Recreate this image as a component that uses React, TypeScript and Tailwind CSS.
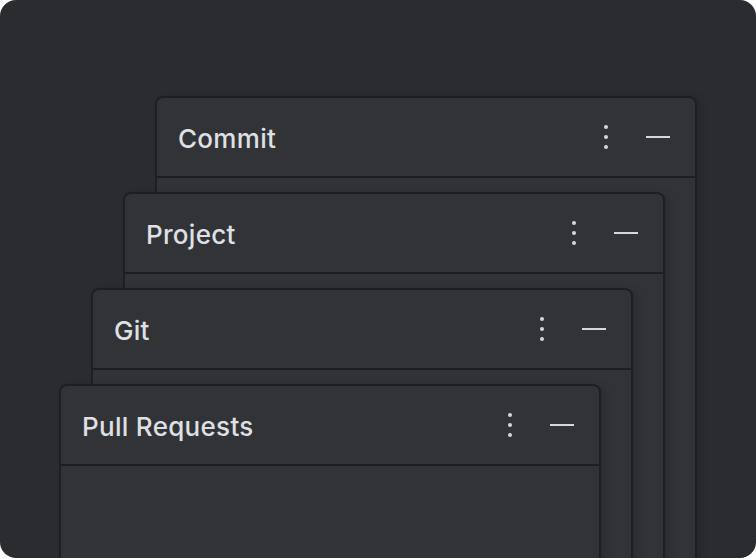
const panels = [
  { title: "Commit", left: 155, top: 96 },
  { title: "Project", left: 123, top: 192 },
  { title: "Git", left: 91, top: 288 },
  { title: "Pull Requests", left: 59, top: 384 },
];

function Kebab() {
  return (
    <div className="flex flex-col items-center gap-[6px]">
      <span className="h-[4px] w-[4px] rounded-full bg-[#d6d7db]" />
      <span className="h-[4px] w-[4px] rounded-full bg-[#d6d7db]" />
      <span className="h-[4px] w-[4px] rounded-full bg-[#d6d7db]" />
    </div>
  );
}

export default function App() {
  return (
    <div className="h-[558px] w-[756px] bg-white" style={{ fontFamily: "Inter, 'Noto Sans', sans-serif" }}>
      <div className="relative h-full w-full overflow-hidden rounded-2xl bg-[#2b2c30]">
        {panels.map((p) => (
          <div
            key={p.title}
            className="absolute flex h-[600px] w-[542px] flex-col rounded-lg border-2 border-[#1e1f22] bg-[#323337] shadow-[4px_0_6px_rgba(0,0,0,0.12)]"
            style={{ left: p.left, top: p.top }}
          >
            <div className="flex h-[80px] items-center border-b-2 border-[#1e1f22] pl-[21px] pr-[25px]">
              <span className="flex-1 pt-[2px] text-[26px] font-medium tracking-[0.3px] text-[#dfe0e4]">{p.title}</span>
              <Kebab />
              <span className="ml-[38px] h-[2px] w-6 bg-[#d6d7db]" />
            </div>
            <div className="flex-1" />
          </div>
        ))}
      </div>
    </div>
  );
}
